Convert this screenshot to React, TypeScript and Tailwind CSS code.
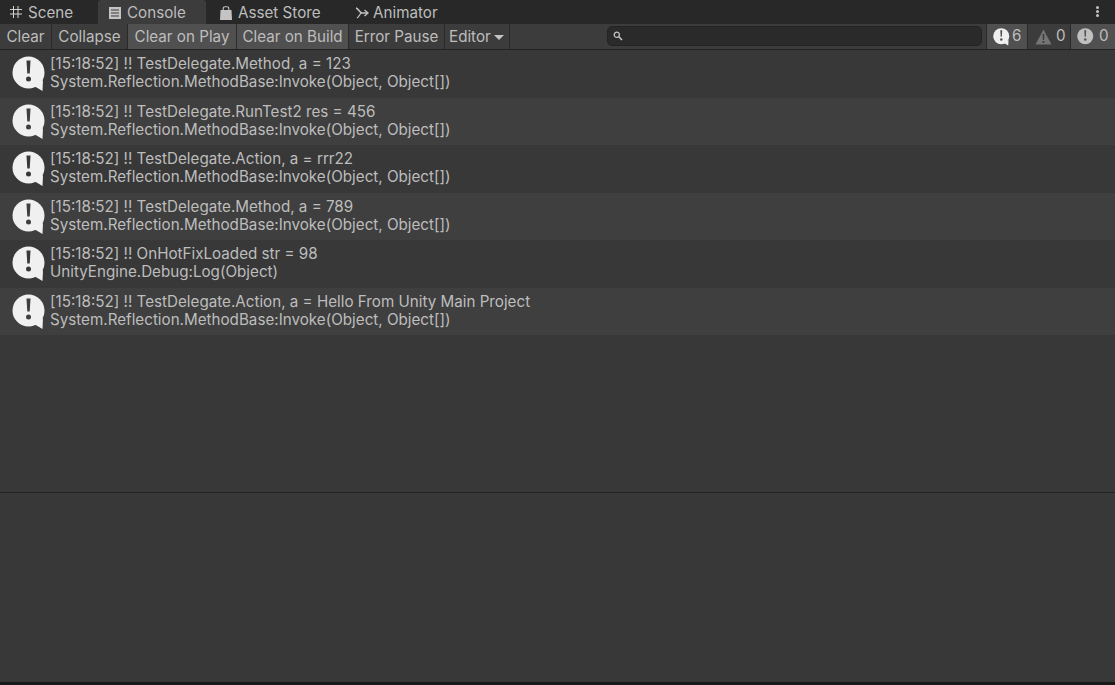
const logs = [
  { head: '[15:18:52] !! TestDelegate.Method, a = 123', stack: 'System.Reflection.MethodBase:Invoke(Object, Object[])' },
  { head: '[15:18:52] !! TestDelegate.RunTest2 res = 456', stack: 'System.Reflection.MethodBase:Invoke(Object, Object[])' },
  { head: '[15:18:52] !! TestDelegate.Action, a = rrr22', stack: 'System.Reflection.MethodBase:Invoke(Object, Object[])' },
  { head: '[15:18:52] !! TestDelegate.Method, a = 789', stack: 'System.Reflection.MethodBase:Invoke(Object, Object[])' },
  { head: '[15:18:52] !! OnHotFixLoaded str = 98', stack: 'UnityEngine.Debug:Log(Object)' },
  { head: '[15:18:52] !! TestDelegate.Action, a = Hello From Unity Main Project', stack: 'System.Reflection.MethodBase:Invoke(Object, Object[])' },
]

function Bubble({ size, color, mark, tail = true, className = '' }: { size: number; color: string; mark: string; tail?: boolean; className?: string }) {
  return (
    <svg width={size} height={size * 36 / 34} viewBox="0 0 34 36" className={`shrink-0 ${className}`}>
      <circle cx="16.5" cy="16.5" r="16" fill={color} />
      {tail && <path d="M22 30 L31 24 L30.5 35 Z" fill={color} />}
      <path d="M14.5 4.5 H18.5 L17.7 17.5 H15.3 Z" fill={mark} />
      <circle cx="16.5" cy="23" r="2.5" fill={mark} />
    </svg>
  )
}

function ToolButton({ label, active, className }: { label: string; active?: boolean; className: string }) {
  return (
    <div
      className={`flex h-full items-center justify-center border-r border-[#2a2a2a] pt-[1px] text-[15.2px] text-[#bdbdbd] ${active ? 'bg-[#505050]' : ''} ${className}`}
    >
      {label}
    </div>
  )
}

function Tab({ label, icon, className }: { label: string; icon: React.ReactNode; className: string }) {
  return (
    <div className={`flex h-full items-center pt-[1px] text-[15.2px] text-[#bdbdbd] ${className}`}>
      {icon}
      <span className="mt-[1px]">{label}</span>
    </div>
  )
}

export default function App() {
  return (
    <div className="flex h-[685px] w-[1115px] flex-col overflow-hidden bg-[#383838] font-['Inter',sans-serif]">
      {/* Tabs */}
      <div className="flex h-6 shrink-0 items-stretch bg-[#282828]">
        <Tab
          label="Scene"
          className="w-[98px] pl-[10px]"
          icon={
            <svg width="12" height="12" viewBox="0 0 12 12" className="mb-[1px] mr-[6px]" stroke="#d2d2d2" strokeWidth="1">
              <path d="M3.5 0V12M8 0V12M0 3.5H12M0 8H12" />
            </svg>
          }
        />
        <Tab
          label="Console"
          className="w-[108px] rounded-t-[3px] bg-[#3c3c3c] pl-[11px]"
          icon={
            <svg width="12" height="12" viewBox="0 0 12 12" className="mr-[6px]">
              <rect width="12" height="12" fill="#c4c4c4" />
              <path d="M2 3H10M2 6H10M2 9H10" stroke="#3c3c3c" strokeWidth="1" />
            </svg>
          }
        />
        <Tab
          label="Asset Store"
          className="w-[135px] pl-[14px]"
          icon={
            <svg width="12" height="14" viewBox="0 0 12 14" className="mr-[6px]">
              <path d="M3.2 5V2.5a1.8 1.8 0 0 1 1.8-1.8h2a1.8 1.8 0 0 1 1.8 1.8V5" fill="none" stroke="#c4c4c4" strokeWidth="1.1" />
              <path d="M0.5 4H11.5L12 14H0Z" fill="#c4c4c4" />
            </svg>
          }
        />
        <Tab
          label="Animator"
          className="w-[120px] pl-[14px]"
          icon={
            <svg width="14" height="12" viewBox="0 0 14 12" className="mr-[4px]" fill="none" stroke="#c4c4c4">
              <path d="M1 1C3.5 1.5 4.5 6 7 6H12" strokeWidth="1.5" />
              <path d="M2 11C4 10 4.5 7 6.5 6" strokeWidth="1.3" />
              <path d="M9.5 3L13 6L9.5 9" strokeWidth="1.3" />
            </svg>
          }
        />
        <div className="ml-auto mr-[16px] mb-[1px] flex flex-col justify-center gap-[1px]">
          <span className="size-[3px] rounded-full bg-[#c4c4c4]" />
          <span className="size-[3px] rounded-full bg-[#c4c4c4]" />
          <span className="size-[3px] rounded-full bg-[#c4c4c4]" />
        </div>
      </div>

      {/* Toolbar */}
      <div className="flex h-[26px] shrink-0 items-stretch border-b border-[#232323] bg-[#3c3c3c]">
        <ToolButton label="Clear" className="w-[52px]" />
        <ToolButton label="Collapse" className="w-[76px]" />
        <ToolButton label="Clear on Play" active className="w-[109px]" />
        <ToolButton label="Clear on Build" active className="w-[112px]" />
        <ToolButton label="Error Pause" className="w-[96px]" />
        <div className="flex h-full w-[65px] items-center border-r border-[#2a2a2a] pl-[4px] pt-[1px] text-[15.2px] text-[#bdbdbd]">
          Editor
          <span className="ml-[3px] h-0 w-0 border-x-[5px] border-t-[5px] border-x-transparent border-t-[#c4c4c4]" />
        </div>
        <div className="ml-[97px] mt-[2px] flex h-[20px] w-[375px] items-center rounded-[5px] border border-[#232323] bg-[#2a2a2a] pl-[5px]">
          <svg width="10" height="10" viewBox="0 0 10 10" fill="none" stroke="#c4c4c4">
            <circle cx="3.8" cy="3.8" r="2.6" strokeWidth="1.3" />
            <path d="M5.8 5.8L9 9" strokeWidth="1.6" />
          </svg>
        </div>
        <div className="ml-[4px] flex h-full w-[42px] items-center border-x border-[#2a2a2a] bg-[#505050] pl-[6px] text-[15.2px] text-[#bdbdbd]">
          <Bubble size={17} color="#f0f0f0" mark="#505050" />
          <span className="ml-[2px]">6</span>
        </div>
        <div className="flex h-full w-[43px] items-center border-r border-[#2a2a2a] pl-[7px] text-[15.2px] text-[#bdbdbd]">
          <svg width="17" height="16" viewBox="0 0 17 16" className="shrink-0">
            <path d="M8.5 0.5L16.5 15.5H0.5Z" fill="#757575" />
            <path d="M7.6 5H9.4L9.1 11H7.9Z" fill="#3c3c3c" />
            <circle cx="8.5" cy="13" r="1.1" fill="#3c3c3c" />
          </svg>
          <span className="ml-[4px]">0</span>
        </div>
        <div className="flex h-full flex-1 items-center bg-[#505050] pl-[6px] text-[15.2px] text-[#bdbdbd]">
          <Bubble size={17} color="#c0c0c0" mark="#505050" tail={false} />
          <span className="ml-[5px]">0</span>
        </div>
      </div>

      {/* Log list */}
      <div className="flex h-[443px] shrink-0 flex-col border-b border-[#232323]">
        {logs.map((log, i) => (
          <div key={i} className={`flex h-[47.5px] shrink-0 items-center pl-[12px] ${i % 2 ? 'bg-[#3f3f3f]' : ''}`}>
            <Bubble size={34} color="#f0f0f0" mark={i % 2 ? '#3f3f3f' : '#383838'} className="mt-[1px]" />
            <div className="mb-[1px] ml-[4px] text-[15.2px] leading-[18px] whitespace-nowrap text-[#bdbdbd]">
              <div>{log.head}</div>
              <div>{log.stack}</div>
            </div>
          </div>
        ))}
      </div>

      {/* Detail pane */}
      <div className="flex-1" />
      <div className="h-[3px] shrink-0 bg-[#191919]" />
    </div>
  )
}
